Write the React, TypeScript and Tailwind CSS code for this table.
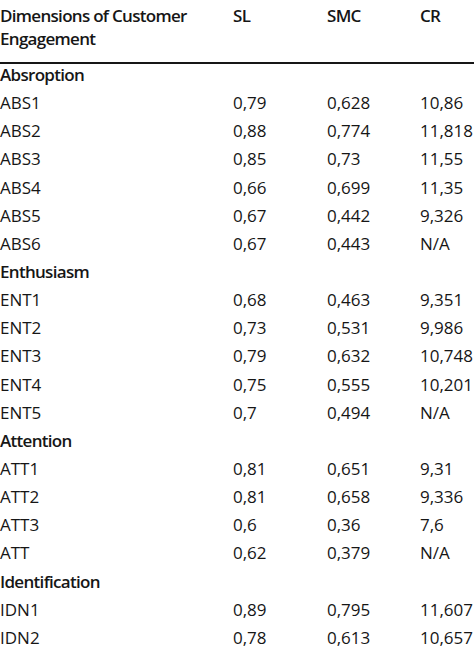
const groups: { name: string; rows: [string, string, string, string][] }[] = [
  {
    name: "Absroption",
    rows: [
      ["ABS1", "0,79", "0,628", "10,86"],
      ["ABS2", "0,88", "0,774", "11,818"],
      ["ABS3", "0,85", "0,73", "11,55"],
      ["ABS4", "0,66", "0,699", "11,35"],
      ["ABS5", "0,67", "0,442", "9,326"],
      ["ABS6", "0,67", "0,443", "N/A"],
    ],
  },
  {
    name: "Enthusiasm",
    rows: [
      ["ENT1", "0,68", "0,463", "9,351"],
      ["ENT2", "0,73", "0,531", "9,986"],
      ["ENT3", "0,79", "0,632", "10,748"],
      ["ENT4", "0,75", "0,555", "10,201"],
      ["ENT5", "0,7", "0,494", "N/A"],
    ],
  },
  {
    name: "Attention",
    rows: [
      ["ATT1", "0,81", "0,651", "9,31"],
      ["ATT2", "0,81", "0,658", "9,336"],
      ["ATT3", "0,6", "0,36", "7,6"],
      ["ATT", "0,62", "0,379", "N/A"],
    ],
  },
  {
    name: "Identification",
    rows: [
      ["IDN1", "0,89", "0,795", "11,607"],
      ["IDN2", "0,78", "0,613", "10,657"],
    ],
  },
];

const cols = "grid grid-cols-[233px_94px_93px_1fr]";

export default function App() {
  return (
    <div
      className="w-[474px] h-[651px] overflow-hidden bg-white text-[#161616] text-[17px]"
      style={{ fontFamily: '"Open Sans", "Noto Sans", sans-serif' }}
    >
      <div className={`${cols} border-b-2 border-[#161616] pt-[4px] pb-[12px] leading-[23px] font-semibold tracking-[-0.7px]`}>
        <div>
          Dimensions of Customer
          <br />
          Engagement
        </div>
        <div>SL</div>
        <div>SMC</div>
        <div>CR</div>
      </div>
      {groups.map((g) => (
        <div key={g.name}>
          <div className="h-[28.15px] leading-[22px] font-semibold tracking-[-0.7px]">{g.name}</div>
          {g.rows.map((r) => (
            <div key={r[0]} className={`${cols} h-[28.15px] leading-[22px]`}>
              {r.map((cell, i) => (
                <div key={i}>{cell}</div>
              ))}
            </div>
          ))}
        </div>
      ))}
    </div>
  );
}
